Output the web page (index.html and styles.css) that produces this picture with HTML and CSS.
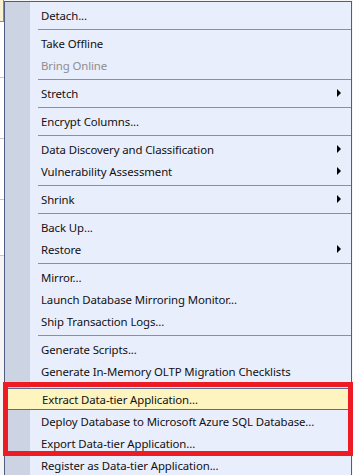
FILE: index.html
```html
<!DOCTYPE html>
<html>
<head>
<meta charset="utf-8">
<link rel="stylesheet" href="styles.css">
</head>
<body>
<div class="screen">
  <div class="bgstrip">
    <div class="bg-yellow"></div>
    <div class="bg-cell"></div>
    <div class="bg-cell tall"></div>
    <div class="bg-cell tall"></div>
    <div class="bg-cell"></div>
  </div>
  <div class="menu">
    <div class="item">Detach...</div>
    <div class="sep"></div>
    <div class="item">Take Offline</div>
    <div class="item disabled">Bring Online</div>
    <div class="sep"></div>
    <div class="item">Stretch<span class="arrow"></span></div>
    <div class="sep"></div>
    <div class="item">Encrypt Columns...</div>
    <div class="sep"></div>
    <div class="item">Data Discovery and Classification<span class="arrow"></span></div>
    <div class="item">Vulnerability Assessment<span class="arrow"></span></div>
    <div class="sep"></div>
    <div class="item">Shrink<span class="arrow"></span></div>
    <div class="sep"></div>
    <div class="item">Back Up...</div>
    <div class="item">Restore<span class="arrow"></span></div>
    <div class="sep"></div>
    <div class="item">Mirror...</div>
    <div class="item">Launch Database Mirroring Monitor...</div>
    <div class="item">Ship Transaction Logs...</div>
    <div class="sep"></div>
    <div class="item">Generate Scripts...</div>
    <div class="item">Generate In-Memory OLTP Migration Checklists</div>
    <div class="sep"></div>
    <div class="item hover">Extract Data-tier Application...</div>
    <div class="item">Deploy Database to Microsoft Azure SQL Database...</div>
    <div class="item">Export Data-tier Application...</div>
    <div class="item">Register as Data-tier Application...</div>
  </div>
</div>
<div class="callout"></div>
</body>
</html>
```
FILE: styles.css
```css
html, body {
  margin: 0;
  padding: 0;
}
body {
  width: 353px;
  height: 475px;
  overflow: hidden;
  background: #f5f5f5;
  font-family: "Noto Sans", "Open Sans", sans-serif;
  font-size: 11.4px;
  letter-spacing: -0.1px;
  color: #000;
  position: relative;
}
.screen {
  display: flex;
  align-items: flex-start;
}
.bgstrip {
  width: 4px;
  flex: none;
  display: flex;
  flex-direction: column;
}
.bg-yellow {
  height: 21px;
  background: #fbf3cf;
  border-right: 1px solid #8a8a8a;
  border-bottom: 1px solid #8a8a8a;
}
.bg-cell {
  height: 55px;
  border-bottom: 1px solid #c8c8c8;
  background: #ffffff;
}
.bg-cell.tall {
  height: 60px;
}
.menu {
  margin-top: 1px;
  width: 346px;
  flex: none;
  border: 1px solid #4f5e80;
  padding: 2px 0 0 0;
  background: linear-gradient(to right, #ccd4e3 0, #ccd4e3 25px, #e9eefd 25px);
  display: flex;
  flex-direction: column;
}
.item {
  height: 22px;
  display: flex;
  align-items: center;
  padding-left: 36px;
  white-space: nowrap;
  color: #111;
  box-sizing: border-box;
}
.item.disabled {
  color: #8d8d8d;
}
.item.hover {
  margin: 0 1px 0 2px;
  padding-left: 34px;
  background: #fdf4bf;
  border: 1px solid #5a6c93;
}
.arrow {
  margin-left: auto;
  margin-right: 10px;
  width: 0;
  height: 0;
  border-left: 4px solid #000;
  border-top: 4px solid transparent;
  border-bottom: 4px solid transparent;
}
.sep {
  height: 6px;
  display: flex;
  align-items: center;
  padding-left: 33px;
}
.sep::before {
  content: "";
  flex: 1;
  height: 1px;
  background: #8591ab;
}
.callout {
  position: absolute;
  left: 3px;
  top: 382px;
  width: 340px;
  height: 64px;
  border: 5px solid #ed1c24;
}
```
